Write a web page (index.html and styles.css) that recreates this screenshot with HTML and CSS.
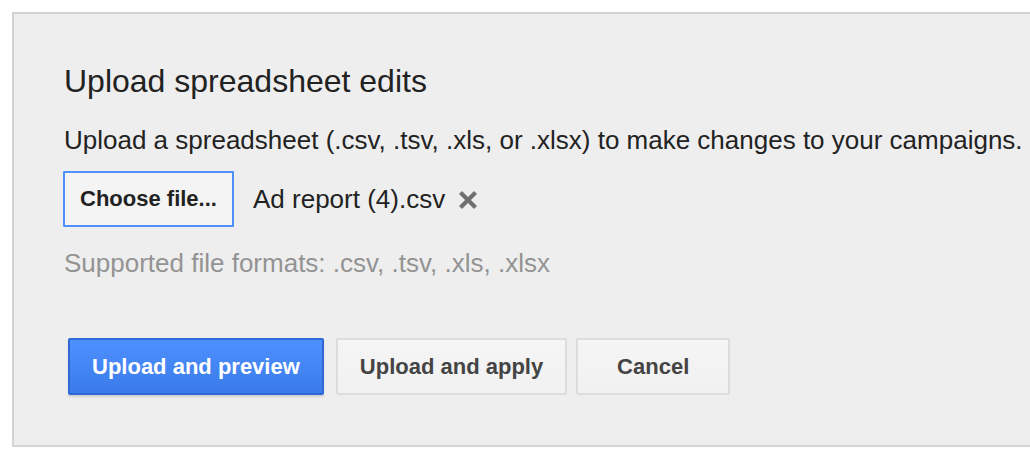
FILE: index.html
```html
<!DOCTYPE html>
<html lang="en">
<head>
<meta charset="utf-8">
<title>Upload spreadsheet edits</title>
<link rel="stylesheet" href="styles.css">
</head>
<body>
<div class="panel">
  <h1 class="title">Upload spreadsheet edits</h1>
  <p class="desc">Upload a spreadsheet (.csv, .tsv, .xls, or .xlsx) to make changes to your campaigns.</p>
  <div class="file-row">
    <button class="choose">Choose file...</button>
    <span class="filename">Ad report (4).csv</span>
    <svg class="remove" width="20" height="20" viewBox="0 0 20 20" aria-label="Remove">
      <path d="M2.5 2.5 L17.5 17.5 M17.5 2.5 L2.5 17.5" stroke="#6f6f6f" stroke-width="4.2" stroke-linecap="butt" fill="none"/>
    </svg>
  </div>
  <p class="hint">Supported file formats: .csv, .tsv, .xls, .xlsx</p>
  <div class="actions">
    <button class="btn btn-primary">Upload and preview</button>
    <button class="btn">Upload and apply</button>
    <button class="btn btn-cancel">Cancel</button>
  </div>
</div>
</body>
</html>
```
FILE: styles.css
```css
html, body {
  margin: 0;
  padding: 0;
  background: #ffffff;
}

body {
  font-family: "Liberation Sans", Arial, sans-serif;
  color: #222222;
  overflow: hidden;
}

.panel {
  margin: 12px 0 0 12px;
  box-sizing: border-box;
  height: 435px;
  width: calc(100% - 12px);
  border: 2px solid #d3d3d3;
  border-right: none;
  background: #eeeeee;
  padding: 47px 0 0 49px;
}

.title {
  margin: 0;
  font-size: 32px;
  line-height: 40px;
  font-weight: normal;
  color: #222222;
  padding-left: 1px;
}

.desc {
  margin: 23px 0 0;
  font-size: 26px;
  line-height: 32px;
  white-space: nowrap;
  padding-left: 1px;
}

.file-row {
  margin-top: 15px;
  display: flex;
  align-items: center;
  height: 56px;
}

.choose {
  box-sizing: border-box;
  width: 171px;
  height: 56px;
  border: 2px solid #4d90fe;
  background: #f4f4f4;
  font-family: "Liberation Sans", Arial, sans-serif;
  font-weight: bold;
  font-size: 22px;
  color: #222222;
  padding: 0;
  border-radius: 1px;
}

.filename {
  margin-left: 19px;
  font-size: 26px;
  line-height: 32px;
  color: #222222;
}

.remove {
  margin-left: 13px;
  margin-top: 2px;
  display: block;
}

.hint {
  margin: 20px 0 0;
  font-size: 26px;
  line-height: 32px;
  color: #939393;
  padding-left: 1px;
}

.actions {
  margin: 59px 0 0 5px;
  display: flex;
  gap: 12px;
}

.btn {
  box-sizing: border-box;
  height: 57px;
  padding: 0 22px;
  border: 2px solid #dcdcdc;
  border-radius: 2px;
  background: linear-gradient(#f5f5f5, #f1f1f1);
  font-family: "Liberation Sans", Arial, sans-serif;
  font-weight: bold;
  font-size: 22px;
  color: #444444;
}

.btn + .btn-cancel {
  margin-left: -3px;
  width: 154px;
  padding: 0;
}

.btn-primary {
  background: linear-gradient(#4d90fe, #3a7be9);
  border-color: #3068d6;
  color: #ffffff;
  box-shadow: 0 2px 2px rgba(0, 0, 0, 0.12);
}
```
